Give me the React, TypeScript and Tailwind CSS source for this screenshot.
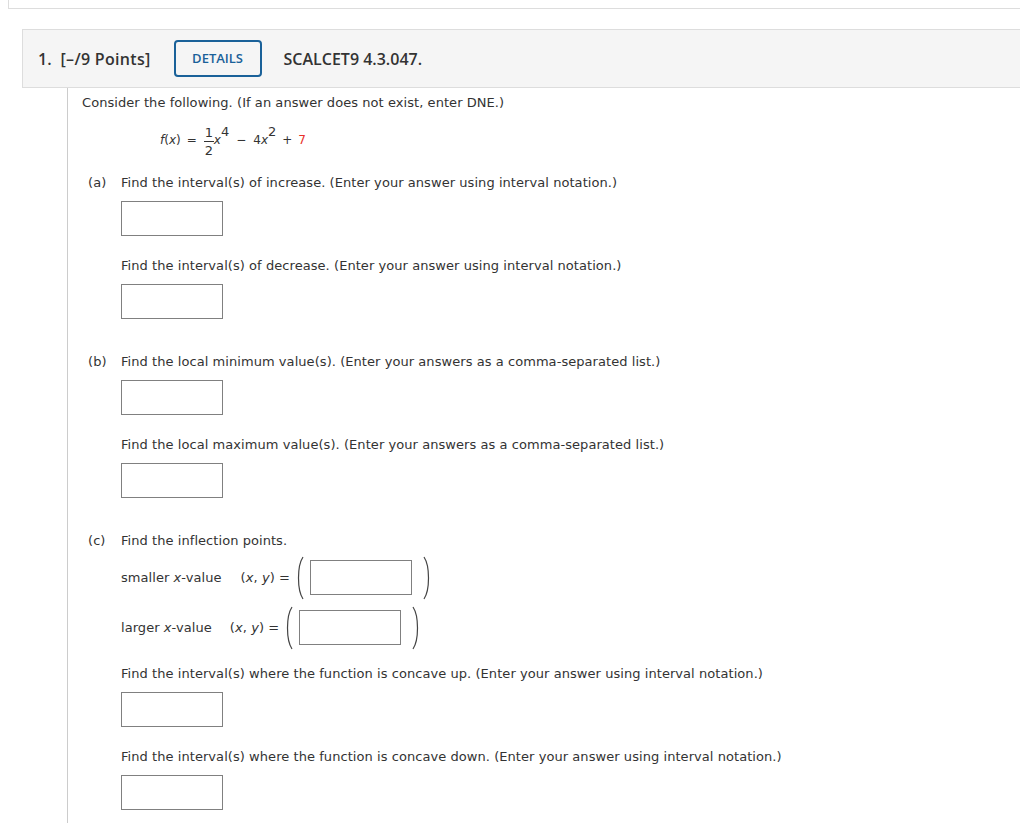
import React from 'react';

const body = "font-['DejaVu_Sans',Verdana,sans-serif] text-[13px] tracking-[0.06px] text-[#333]";

function AnswerBox() {
  return <div className="w-[102px] h-[35px] border border-[#808080] bg-white" />;
}

function Line({ children, className = '' }: { children: React.ReactNode; className?: string }) {
  return <div className={`h-4 leading-[18px] whitespace-nowrap ${className}`}>{children}</div>;
}

function Paren({ flip = false }: { flip?: boolean }) {
  return (
    <svg width="10" height="44" viewBox="0 0 10 44" className={flip ? 'scale-x-[-1]' : ''}>
      <path d="M8 1 C2 10 2 34 8 43" fill="none" stroke="#444" strokeWidth="1.2" />
    </svg>
  );
}

function PointRow({ label, gap }: { label: string; gap: string }) {
  return (
    <div className="flex items-center h-[35px]">
      <span className="whitespace-nowrap">
        {label.split('x')[0]}
        <i>x</i>
        {label.split('x')[1]}
      </span>
      <span className={`${gap} whitespace-nowrap`}>
        (<i>x</i>, <i>y</i>) =
      </span>
      <span className="ml-[5px]">
        <Paren />
      </span>
      <span className="ml-[5px]">
        <AnswerBox />
      </span>
      <span className="ml-[10px]">
        <Paren flip />
      </span>
    </div>
  );
}

export default function App() {
  return (
    <div className="min-h-screen bg-white overflow-hidden">
      <div className="ml-2 h-[9px] border-l border-b border-[#ddd]" />

      <div className="mt-[20px] ml-[22px] h-[59px] bg-[#f5f5f5] border border-r-0 border-[#ddd] flex items-center pl-[15px] font-['Open_Sans',sans-serif] font-semibold text-[16px] text-[#333]">
        <span>1.</span>
        <span className="ml-[9px] tracking-[0.3px]">[–/9 Points]</span>
        <button className="ml-[23px] w-[88px] h-[37px] rounded-[4px] border-2 border-[#1a6199] text-[#1a6199] text-[13px] font-semibold">
          DETAILS
        </button>
        <span className="ml-[22px]">SCALCET9 4.3.047.</span>
      </div>

      <div className={`ml-[67px] border-l border-[#ccc] pl-[14px] pt-[6px] pb-4 ${body}`}>
        <Line>Consider the following. (If an answer does not exist, enter DNE.)</Line>

        <div className="mt-[14px] ml-[78px] h-[32px] flex items-center text-[12px] tracking-normal">
          <span className="italic">f</span>
          <span>(</span>
          <span className="italic">x</span>
          <span>)</span>
          <span className="mx-[6px]">=</span>
          <span className="ml-[1px] inline-flex flex-col items-center mt-[2px] text-[13px]">
            <span className="leading-[17px]">1</span>
            <span className="w-[10px] border-t border-[#333]" />
            <span className="leading-[17px]">2</span>
          </span>
          <span className="italic">x</span>
          <span className="self-start -mt-[2px] text-[13px]">4</span>
          <span className="mx-[7px]">−</span>
          <span>4</span>
          <span className="italic">x</span>
          <span className="self-start -mt-[2px] text-[13px]">2</span>
          <span className="mx-[6px]">+</span>
          <span className="text-[#e8302a]">7</span>
        </div>

        <div className="mt-[18px] ml-[6px] flex">
          <Line className="w-[33px]">(a)</Line>
          <div>
            <Line>Find the interval(s) of increase. (Enter your answer using interval notation.)</Line>
            <div className="mt-[11px]"><AnswerBox /></div>
            <Line className="mt-[21px]">Find the interval(s) of decrease. (Enter your answer using interval notation.)</Line>
            <div className="mt-[11px]"><AnswerBox /></div>
          </div>
        </div>

        <div className="mt-[34px] ml-[6px] flex">
          <Line className="w-[33px]">(b)</Line>
          <div>
            <Line>Find the local minimum value(s). (Enter your answers as a comma-separated list.)</Line>
            <div className="mt-[11px]"><AnswerBox /></div>
            <Line className="mt-[21px]">Find the local maximum value(s). (Enter your answers as a comma-separated list.)</Line>
            <div className="mt-[11px]"><AnswerBox /></div>
          </div>
        </div>

        <div className="mt-[34px] ml-[6px] flex">
          <Line className="w-[33px]">(c)</Line>
          <div>
            <Line>Find the inflection points.</Line>
            <div className="mt-[12px]">
              <PointRow label="smaller x-value" gap="ml-[19px]" />
            </div>
            <div className="mt-[15px]">
              <PointRow label="larger x-value" gap="ml-[18px]" />
            </div>
            <Line className="mt-[20px]">Find the interval(s) where the function is concave up. (Enter your answer using interval notation.)</Line>
            <div className="mt-[11px]"><AnswerBox /></div>
            <Line className="mt-[21px]">Find the interval(s) where the function is concave down. (Enter your answer using interval notation.)</Line>
            <div className="mt-[11px]"><AnswerBox /></div>
          </div>
        </div>
      </div>
    </div>
  );
}
